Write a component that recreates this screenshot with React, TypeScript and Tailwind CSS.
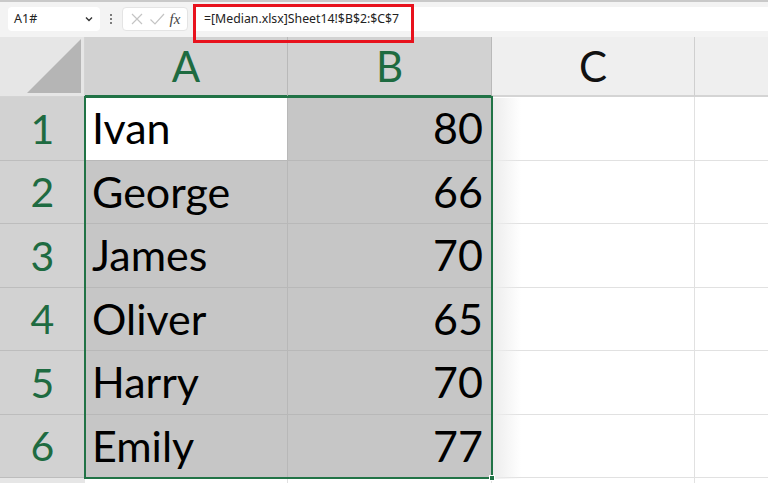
import React from 'react';

const rows = [
  { name: 'Ivan', score: 80, h: 'h-[64px]' },
  { name: 'George', score: 66, h: 'h-[63px]' },
  { name: 'James', score: 70, h: 'h-[64px]' },
  { name: 'Oliver', score: 65, h: 'h-[63px]' },
  { name: 'Harry', score: 70, h: 'h-[64px]' },
  { name: 'Emily', score: 77, h: 'h-[63px]' },
];

const font = { fontFamily: 'Lato, "Open Sans", sans-serif' };

export default function App() {
  return (
    <div className="relative w-[768px] h-[483px] overflow-hidden bg-white" style={font}>
      {/* Formula bar */}
      <div className="relative z-10 h-[37px] bg-[#f3f3f3] border-t-2 border-[#c9c9c9] flex items-start pt-[5px] pl-[8px] gap-[6px]">
        <div className="w-[92px] h-[24px] bg-white rounded-[4px] flex items-center justify-between px-[6px] text-[12.5px] text-[#222]" style={{ fontFamily: '"Segoe UI", "Noto Sans", sans-serif' }}>
          <span>A1#</span>
          <svg width="10" height="10" viewBox="0 0 10 10"><path d="M2 3.5 L5 6.5 L8 3.5" fill="none" stroke="#333" strokeWidth="1.4" /></svg>
        </div>
        <div className="h-[24px] flex flex-col items-center justify-center gap-[2px] w-[10px]">
          <span className="w-[2px] h-[2px] bg-[#555] rounded-full" />
          <span className="w-[2px] h-[2px] bg-[#555] rounded-full" />
          <span className="w-[2px] h-[2px] bg-[#555] rounded-full" />
        </div>
        <div className="w-[66px] h-[24px] bg-white rounded-[4px] border border-[#e4e4e4] flex items-center justify-around px-[4px]">
          <svg width="14" height="14" viewBox="0 0 14 14"><path d="M2 2 L12 12 M12 2 L2 12" stroke="#c4c4c4" strokeWidth="1.2" /></svg>
          <svg width="16" height="14" viewBox="0 0 16 14"><path d="M1.5 7.5 L6 12 L15 2" fill="none" stroke="#c4c4c4" strokeWidth="1.2" /></svg>
          <span className="text-[15px] italic text-[#444]" style={{ fontFamily: '"Liberation Serif", serif' }}>fx</span>
        </div>
        <div className="flex-1 h-[24px] bg-white flex items-center pl-[10px] text-[12.3px] text-[#222]" style={{ fontFamily: '"Segoe UI", "Noto Sans", sans-serif' }}>
          =[Median.xlsx]Sheet14!$B$2:$C$7
        </div>
        <div className="absolute left-[193px] top-[2px] w-[221px] h-[39px] border-[3px] border-[#e8121d]" />
      </div>

      {/* Sheet */}
      <div className="relative">
        <div className="grid grid-cols-[85px_203px_204px_203px_73px]">
          <div className="h-[60px] bg-[#e6e6e6] border-r border-b border-[#d4d4d4] relative">
            <svg className="absolute right-[3px] bottom-[3px]" width="54" height="54" viewBox="0 0 54 54"><path d="M54 0 L54 54 L0 54 Z" fill="#b5b5b5" /></svg>
          </div>
          <div className="h-[60px] bg-[#d2d2d2] border-r border-[#b9b9b9] border-b-2 border-b-[#217346] flex items-center justify-center text-[42px] text-[#1e6b41]">A</div>
          <div className="h-[60px] bg-[#d2d2d2] border-r border-[#b9b9b9] border-b-2 border-b-[#217346] flex items-center justify-center text-[42px] text-[#1e6b41]">B</div>
          <div className="h-[60px] bg-[#efefef] border-r border-[#cfcfcf] border-b-2 border-b-[#d4d4d4] flex items-center justify-center text-[42px] text-[#111]">C</div>
          <div className="h-[60px] bg-[#efefef] border-b-2 border-[#d4d4d4]" />

          {rows.map((r, i) => (
            <React.Fragment key={r.name}>
              <div className={`${r.h} bg-[#d2d2d2] border-b border-[#bdbdbd] flex items-center justify-center text-[41px] text-[#1e6b41]`}>{i + 1}</div>
              <div className={`${r.h} ${i === 0 ? 'bg-white' : 'bg-[#c6c6c6]'} border-r border-b border-[#b8b8b8] flex items-center pl-[7px] text-[43px] text-black`}>{r.name}</div>
              <div className={`${r.h} bg-[#c6c6c6] border-r border-b border-[#b8b8b8] flex items-center justify-end pr-[8px] text-[43px] text-black`}>{r.score}</div>
              <div className={`${r.h} bg-white border-r border-b border-[#e1e1e1]`} />
              <div className={`${r.h} bg-white border-b border-[#e1e1e1]`} />
            </React.Fragment>
          ))}
          <div className="h-[10px] bg-[#e6e6e6]" />
          <div className="h-[10px] bg-white border-r border-[#e1e1e1]" />
          <div className="h-[10px] bg-white border-r border-[#e1e1e1]" />
          <div className="h-[10px] bg-white border-r border-[#e1e1e1]" />
          <div className="h-[10px] bg-white" />
        </div>

        {/* shadow beside selection */}
        <div className="absolute left-[493px] top-[61px] w-[28px] h-[381px] bg-gradient-to-r from-[#ececec] to-transparent" />
        {/* selection outline */}
        <div className="absolute left-[84px] top-[59px] w-[409px] h-[383px] border-2 border-[#217346]" />
        <div className="absolute left-[489px] top-[438px] w-[6px] h-[6px] bg-[#217346] border border-white" />
      </div>
    </div>
  );
}
